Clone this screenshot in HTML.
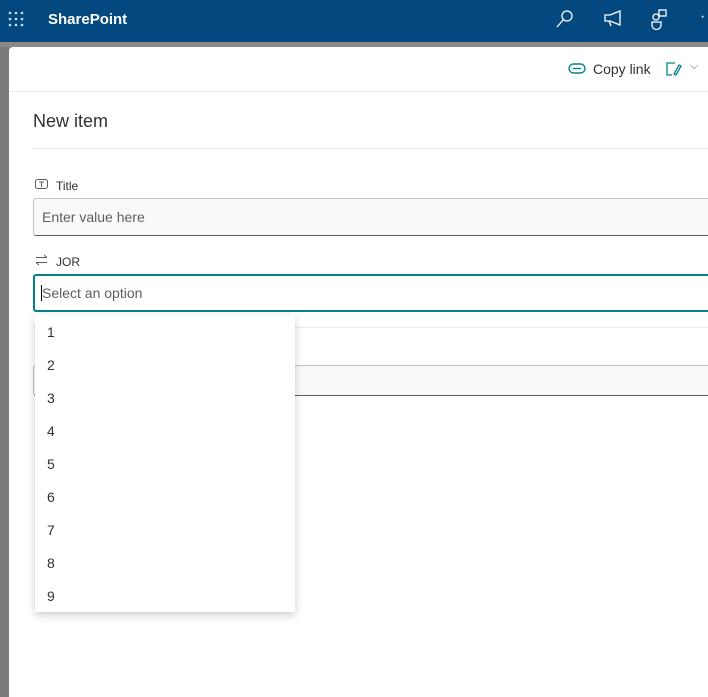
<!DOCTYPE html>
<html><head><style>
body{margin:0;width:708px;height:683px;overflow:hidden;background:#7a7a7a;font-family:"Liberation Sans",sans-serif;position:relative}
.hdr{position:absolute;left:0;top:0;width:708px;height:42px;background:#03497f}
.panel{position:absolute;left:9px;top:47px;width:710px;height:650px;background:#fff;border-radius:4px 0 0 0}
.t{position:absolute;white-space:nowrap}
.dd div{height:33px;line-height:35px;padding-left:12px;font-size:14px;color:#323130}
</style></head><body>
<div class="hdr">
 <svg class="t" style="left:8px;top:11px" width="16" height="16"><g fill="#cfe0f0"><circle cx="2" cy="2" r="1.3"/><circle cx="8" cy="2" r="1.3"/><circle cx="14" cy="2" r="1.3"/><circle cx="2" cy="8" r="1.3"/><circle cx="8" cy="8" r="1.3"/><circle cx="14" cy="8" r="1.3"/><circle cx="2" cy="14" r="1.3"/><circle cx="8" cy="14" r="1.3"/><circle cx="14" cy="14" r="1.3"/></g></svg>
 <div class="t" style="left:48px;top:11px;color:#fff;font-weight:bold;font-size:15px">SharePoint</div>
 <svg class="t" style="left:555px;top:9px" width="20" height="20" fill="none" stroke="#fff" stroke-width="1.3"><circle cx="12" cy="7" r="5"/><path d="M8.5 10.5L2 18"/></svg>
 <svg class="t" style="left:603px;top:9px" width="20" height="20" fill="none" stroke="#fff" stroke-width="1.3"><path d="M2 6h5l10-4v14L7 12H2zM6 12l2 5"/></svg>
 <svg class="t" style="left:650px;top:8px" width="20" height="22" fill="none" stroke="#fff" stroke-width="1.3"><rect x="9" y="2" width="7" height="6"/><circle cx="6" cy="9" r="3"/><path d="M2 14h9v3a4 4 0 0 1-9 0z"/></svg>
 <div class="t" style="left:700px;top:8px;color:#fff;font-size:16px">·</div>
</div>
<div style="position:absolute;left:0;top:42px;width:708px;height:5px;background:#8a8a8a"></div>
<div class="panel"></div>
<svg class="t" style="left:568px;top:62px" width="18" height="14" fill="none" stroke="#038387" stroke-width="1.4"><rect x="1" y="2" width="16" height="9" rx="4.5"/><path d="M5 6.5h8"/></svg>
<div class="t" style="left:593px;top:61px;font-size:14px;color:#323130">Copy link</div>
<svg class="t" style="left:665px;top:61px" width="18" height="17" fill="none" stroke="#038387" stroke-width="1.3"><path d="M10 2H2v12h5M11 14l5-9-2-1-5 9z"/></svg>
<div class="t" style="left:690px;top:60px;font-size:11px;color:#605e5c">⌵</div>
<div class="t" style="left:9px;top:91px;width:700px;height:1px;background:#edebe9"></div>
<div class="t" style="left:33px;top:111px;font-size:18px;color:#323130">New item</div>
<div class="t" style="left:33px;top:148px;width:680px;height:1px;background:#edebe9"></div>
<svg class="t" style="left:35px;top:179px" width="13" height="11" fill="none" stroke="#605e5c" stroke-width="1"><rect x="0.5" y="0.5" width="12" height="9" rx="2"/><path d="M4 3h5M6.5 3v5"/></svg>
<div class="t" style="left:56px;top:179px;font-size:12px;color:#323130">Title</div>
<div class="t" style="left:33px;top:198px;background:#faf9f8;border:1px solid #c8c6c4;border-bottom-color:#605e5c;border-radius:3px;box-sizing:border-box;width:690px;height:38px"></div>
<div class="t" style="left:42px;top:209px;font-size:14px;color:#605e5c">Enter value here</div>
<svg class="t" style="left:35px;top:254px" width="13" height="12" fill="none" stroke="#605e5c" stroke-width="1"><path d="M1 3.5h11M9 1l3 2.5M12 8.5H1M4 11L1 8.5"/></svg>
<div class="t" style="left:56px;top:255px;font-size:12px;color:#323130">JOR</div>
<div class="t" style="left:33px;top:274px;width:690px;height:38px;border:2px solid #038387;border-radius:3px;box-sizing:border-box;background:#fff"></div>
<div class="t" style="left:41px;top:285px;width:1px;height:16px;background:#000"></div>
<div class="t" style="left:42px;top:285px;font-size:14px;color:#605e5c">Select an option</div>
<div class="t" style="left:33px;top:327px;width:680px;height:1px;background:#edebe9"></div>
<div class="t" style="left:33px;top:365px;width:690px;height:31px;background:#faf9f8;border:1px solid #c8c6c4;border-bottom-color:#605e5c;border-radius:3px;box-sizing:border-box"></div>
<div class="t dd" style="left:35px;top:315px;width:260px;height:297px;background:#fff;box-shadow:0 3px 8px rgba(0,0,0,.2)">
<div>1</div><div>2</div><div>3</div><div>4</div><div>5</div><div>6</div><div>7</div><div>8</div><div>9</div>
</div>
</body></html>
